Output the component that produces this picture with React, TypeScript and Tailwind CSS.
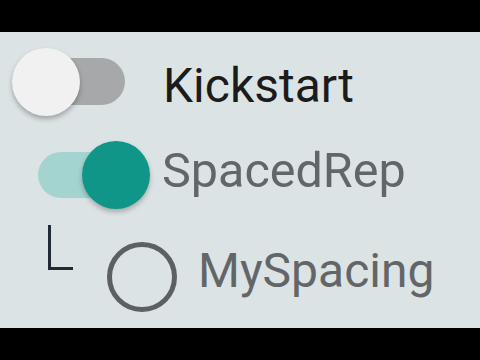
export default function App() {
  return (
    <div className="flex h-[360px] w-[480px] flex-col bg-black font-['Roboto',sans-serif]">
      <div className="h-[32px] shrink-0" />
      <div className="flex h-[296px] shrink-0 flex-col bg-[#dce3e5]">
        {/* Kickstart - off */}
        <div className="mt-[16px] flex h-[68px] items-start">
          <div className="relative ml-[12px] h-[68px] w-[114px]">
            <div className="absolute left-[34px] top-[10px] h-[47px] w-[79px] rounded-full bg-[#a6a8aa]" />
            <div className="absolute left-0 top-0 h-[68px] w-[68px] rounded-full bg-[#f1f1f1] shadow-[0_3px_5px_rgba(0,0,0,0.28)]" />
          </div>
          <span className="ml-[37px] mt-[14px] text-[48px] leading-none text-[#1b1b1b]">Kickstart</span>
        </div>

        {/* SpacedRep - on */}
        <div className="mt-[25px] flex h-[68px] items-start">
          <div className="relative ml-[38px] h-[68px] w-[112px]">
            <div className="absolute left-0 top-[11px] h-[46px] w-[90px] rounded-full bg-[#a4d4cf]" />
            <div className="absolute right-0 top-0 h-[68px] w-[68px] rounded-full bg-[#0f9688] shadow-[0_3px_5px_rgba(0,0,0,0.25)]" />
          </div>
          <span className="ml-[12px] mt-[6px] text-[48.5px] leading-none text-[#636668]">SpacedRep</span>
        </div>

        {/* MySpacing - radio */}
        <div className="mt-[16px] flex items-start">
          <div className="ml-[48px] h-[45px] w-[25px] border-b-[3px] border-l-[3px] border-[#1f2a36]" />
          <div className="ml-[34px] mt-[17px] h-[70px] w-[70px] rounded-full border-[5px] border-[#5c6062]" />
          <span className="ml-[21px] mt-[22px] text-[48px] leading-none text-[#636668]">MySpacing</span>
        </div>
      </div>
      <div className="h-[32px] shrink-0" />
    </div>
  );
}
